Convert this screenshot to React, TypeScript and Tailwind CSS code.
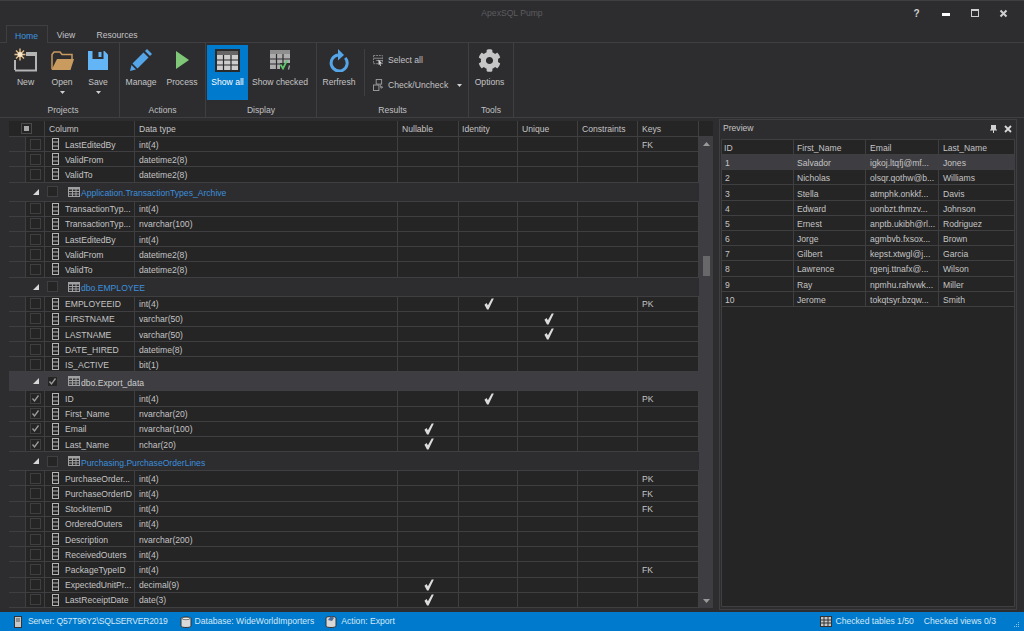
import React from "react";
import { FaCog } from "react-icons/fa";

type Row = {
  name: string;
  type?: string;
  checked?: boolean;
  nullable?: boolean;
  identity?: boolean;
  unique?: boolean;
  keys?: string;
  group?: boolean;
  selected?: boolean;
};

const rows: Row[] = [
  { name: "LastEditedBy", type: "int(4)", keys: "FK" },
  { name: "ValidFrom", type: "datetime2(8)" },
  { name: "ValidTo", type: "datetime2(8)" },
  { name: "Application.TransactionTypes_Archive", group: true },
  { name: "TransactionTyp...", type: "int(4)" },
  { name: "TransactionTyp...", type: "nvarchar(100)" },
  { name: "LastEditedBy", type: "int(4)" },
  { name: "ValidFrom", type: "datetime2(8)" },
  { name: "ValidTo", type: "datetime2(8)" },
  { name: "dbo.EMPLOYEE", group: true },
  { name: "EMPLOYEEID", type: "int(4)", identity: true, keys: "PK" },
  { name: "FIRSTNAME", type: "varchar(50)", unique: true },
  { name: "LASTNAME", type: "varchar(50)", unique: true },
  { name: "DATE_HIRED", type: "datetime(8)" },
  { name: "IS_ACTIVE", type: "bit(1)" },
  { name: "dbo.Export_data", group: true, selected: true, checked: true },
  { name: "ID", type: "int(4)", checked: true, identity: true, keys: "PK" },
  { name: "First_Name", type: "nvarchar(20)", checked: true },
  { name: "Email", type: "nvarchar(100)", checked: true, nullable: true },
  { name: "Last_Name", type: "nchar(20)", checked: true, nullable: true },
  { name: "Purchasing.PurchaseOrderLines", group: true },
  { name: "PurchaseOrder...", type: "int(4)", keys: "PK" },
  { name: "PurchaseOrderID", type: "int(4)", keys: "FK" },
  { name: "StockItemID", type: "int(4)", keys: "FK" },
  { name: "OrderedOuters", type: "int(4)" },
  { name: "Description", type: "nvarchar(200)" },
  { name: "ReceivedOuters", type: "int(4)" },
  { name: "PackageTypeID", type: "int(4)", keys: "FK" },
  { name: "ExpectedUnitPr...", type: "decimal(9)", nullable: true },
  { name: "LastReceiptDate", type: "date(3)", nullable: true },
];

const preview = [
  ["1", "Salvador", "igkoj.ltqfj@mf...", "Jones"],
  ["2", "Nicholas", "olsqr.qothw@b...", "Williams"],
  ["3", "Stella", "atmphk.onkkf...", "Davis"],
  ["4", "Edward", "uonbzt.thmzv...", "Johnson"],
  ["5", "Ernest", "anptb.ukibh@rl...", "Rodriguez"],
  ["6", "Jorge", "agmbvb.fxsox...", "Brown"],
  ["7", "Gilbert", "kepst.xtwgl@j...", "Garcia"],
  ["8", "Lawrence", "rgenj.ttnafx@...", "Wilson"],
  ["9", "Ray", "npmhu.rahvwk...", "Miller"],
  ["10", "Jerome", "tokqtsyr.bzqw...", "Smith"],
];

const TableIcon = ({ size = 12 }: { size?: number }) => (
  <svg width={size} height={size} viewBox="0 0 12 12" className="shrink-0">
    <rect x="0.5" y="1.5" width="11" height="9" fill="none" stroke="#a0a0a0" />
    <rect x="0.5" y="1.5" width="11" height="2" fill="#a0a0a0" />
    <path d="M4.500 3v7M8 3v7M1 5.500h10M1 8h10" stroke="#a0a0a0" strokeWidth="1" />
  </svg>
);

const ColumnIcon = () => (
  <svg width="7" height="12" viewBox="0 0 7 12" className="shrink-0">
    <rect x="0.5" y="0.5" width="6" height="11" fill="none" stroke="#b4b4b4" />
    <path d="M1 4h5M1 8h5" stroke="#b4b4b4" />
  </svg>
);

const Check = () => (
  <svg width="10" height="12" viewBox="0 0 11 13">
    <path d="M0.500 7.200 L2.800 5.400 L4.300 8 L8.500 0.500 L10.800 0.500 L5 12.500 L3.300 12.500 Z" fill="#dcdcdc" />
  </svg>
);

const SmallBox = ({ checked }: { checked?: boolean }) => (
  <div className="w-[11px] h-[11px] border border-[#3f3f42] bg-[#252526] flex items-center justify-center shrink-0">
    {checked && (
      <svg width="9" height="9" viewBox="0 0 9 9">
        <path d="M1.500 4.500 L3.500 7 L7.500 1.500" fill="none" stroke="#9c9c9c" strokeWidth="1.300" />
      </svg>
    )}
  </div>
);

const Caret = () => (
  <svg width="5" height="3" viewBox="0 0 5 3" className="shrink-0">
    <path d="M0 0h5L2.500 3z" fill="#d0d0d0" />
  </svg>
);

const RibbonBtn = ({
  w,
  label,
  icon,
  caret,
  active,
}: {
  w: string;
  label: string;
  icon: React.ReactNode;
  caret?: boolean;
  active?: boolean;
}) => (
  <div className={`${w} h-[55px] flex flex-col items-center shrink-0 ${active ? "bg-[#007acc] text-white" : ""}`}>
    <div className="h-[30px] flex items-center justify-center">{icon}</div>
    <div className="leading-[13px] mt-[1px] whitespace-nowrap">{label}</div>
    {caret && (
      <div className="mt-[2px] leading-none flex">
        <Caret />
      </div>
    )}
  </div>
);

const Group = ({ w, label, children }: { w: string; label: string; children: React.ReactNode }) => (
  <div className={`${w} shrink-0 h-full border-r border-[#3f3f42] flex flex-col`}>
    <div className="h-[55px] mt-[2px] flex">{children}</div>
    <div className="flex-1 flex items-center justify-center text-[#c0c0c0] pt-[4px]">{label}</div>
  </div>
);

const Cell = ({ children, className = "" }: { children?: React.ReactNode; className?: string }) => (
  <div className={`border-r border-[#3f3f42] flex items-center overflow-hidden whitespace-nowrap ${className}`}>
    {children}
  </div>
);

const cols = "grid-cols-[17px_19px_90px_263px_61px_59px_60px_60px_61px]";
const previewCols = "grid-cols-[72px_72px_73px_75px]";

export default function App() {
  return (
    <div
      className="w-[1024px] h-[631px] overflow-hidden bg-[#2d2d30] text-[#c4c4c4] text-[8.6px] flex flex-col border-t border-[#3f3f42]"
      style={{ fontFamily: '"Liberation Sans", Arial, sans-serif' }}
    >
      {/* title bar */}
      <div className="h-[24px] shrink-0 grid grid-cols-[1fr_auto_1fr] items-center">
        <div />
        <div className="text-[#5c5c5e]">ApexSQL Pump</div>
        <div className="flex items-center justify-end pr-[14px] gap-[16px] text-[#cfcfcf]">
          <span className="font-bold text-[10px] w-[13px] text-center">?</span>
          <div className="w-[13px] flex justify-center">
            <div className="w-[8px] h-[3px] bg-white mt-[2px]" />
          </div>
          <div className="w-[13px] flex justify-center">
            <div className="w-[8px] h-[8px] border border-[#cfcfcf] border-t-2" />
          </div>
          <svg width="13" height="9" viewBox="0 0 13 9">
            <path d="M3.500 1.500 L9.500 7.500 M9.500 1.500 L3.500 7.500" stroke="#cfcfcf" strokeWidth="2" />
          </svg>
        </div>
      </div>

      {/* tabs */}
      <div className="h-[18px] shrink-0 flex items-end pl-[6px] border-b border-[#3f3f42]">
        <div className="w-[42px] h-[18px] -mb-px pt-[4px] pr-[1px] bg-[#2d2d30] border border-b-0 border-[#3f3f42] text-[#3c96e0] flex items-center justify-center">
          Home
        </div>
        <div className="w-[36px] h-[18px] pt-[5px] flex items-center justify-center">View</div>
        <div className="w-[66px] h-[18px] pt-[5px] flex items-center justify-center">Resources</div>
      </div>

      {/* ribbon */}
      <div className="h-[75px] shrink-0 flex pl-[7px] border-b border-[#3f3f42]">
        <Group w="w-[113px]" label="Projects">
          <RibbonBtn
            w="w-[37px]"
            label="New"
            icon={
              <svg width="23" height="24" viewBox="0 0 23 24">
                <path d="M1 22V12M1 22.500h21V5H12" fill="none" stroke="#b4b4b4" strokeWidth="2" />
                <rect x="12" y="4" width="11" height="4" fill="#b4b4b4" />
                <path d="M6 0.500v12M0.500 6.500h11M2 2.500l8 8M10 2.500l-8 8" stroke="#e8c088" strokeWidth="1.400" />
                <circle cx="6" cy="6.500" r="2.500" fill="#f4e4c8" />
              </svg>
            }
          />
          <RibbonBtn
            w="w-[36px]"
            label="Open"
            caret
            icon={
              <svg width="23" height="19" viewBox="0 0 23 19">
                <path d="M1 18V3.500L3 1h6l2 2.500h10V8" fill="none" stroke="#c99b5e" strokeWidth="1.500" />
                <path d="M6 8h17L19.500 19H0.500z" fill="#c99b5e" />
              </svg>
            }
          />
          <RibbonBtn
            w="w-[36px]"
            label="Save"
            caret
            icon={
              <svg width="20" height="19" viewBox="0 0 20 19">
                <path d="M0 0h16.500L20 3.500V19H0z" fill="#64b5f6" />
                <rect x="4.500" y="0" width="11" height="8" fill="#2d2d30" />
                <rect x="10.500" y="1" width="3" height="5" fill="#64b5f6" />
              </svg>
            }
          />
        </Group>
        <Group w="w-[86px]" label="Actions">
          <RibbonBtn
            w="w-[42px]"
            label="Manage"
            icon={
              <svg width="22" height="22" viewBox="0 0 22 22">
                <path d="M2.500 14.500L13.500 3.500 18.500 8.500 7.500 19.500z" fill="#55a6e8" />
                <path d="M15 2l2-2 5 5-2 2z" fill="#55a6e8" />
                <path d="M1.500 16L6 20.500 0 22z" fill="#55a6e8" />
              </svg>
            }
          />
          <RibbonBtn
            w="w-[40px]"
            label="Process"
            icon={
              <svg width="13" height="18" viewBox="0 0 13 18">
                <path d="M0 0L13 9 0 18z" fill="#80c878" />
              </svg>
            }
          />
        </Group>
        <Group w="w-[111px]" label="Display">
          <div className="w-[1px]" />
          <RibbonBtn
            w="w-[41px]"
            label="Show all"
            active
            icon={
              <svg width="25" height="23" viewBox="0 0 25 23">
                <rect x="1" y="1" width="23" height="21" fill="#cdcdcd" stroke="#2a2a2a" strokeWidth="2" />
                <rect x="2" y="2" width="21" height="4" fill="#666" />
                <path d="M8.500 6v15M16 6v15M2 11h21M2 16h21" stroke="#2a2a2a" strokeWidth="1.200" />
              </svg>
            }
          />
          <RibbonBtn
            w="w-[64px]"
            label="Show checked"
            icon={
              <svg width="21" height="20" viewBox="0 0 21 20">
                <rect x="0" y="0" width="20" height="19" fill="#aeaeae" />
                <rect x="0" y="0" width="20" height="4" fill="#8f8f8f" />
                <path d="M6.500 4v15M13 4v15M0 9h20M0 14h20" stroke="#2d2d30" strokeWidth="1.200" />
                <path d="M10 13h11v7H10z" fill="#2d2d30" />
                <path d="M10.500 14.500l2.500 4 4-8" fill="none" stroke="#5fc76b" strokeWidth="1.800" />
                <path d="M18.500 19.500l1-4" fill="none" stroke="#aeaeae" strokeWidth="1.200" />
              </svg>
            }
          />
        </Group>
        <Group w="w-[152px]" label="Results">
          <div className="flex w-full">
            <RibbonBtn
              w="w-[44px]"
              label="Rerfresh"
              icon={
                <svg width="20" height="23" viewBox="0 0 20 23">
                  <path d="M16.300 8.900A8 8 0 1 1 9 6.100" fill="none" stroke="#55a6e8" strokeWidth="3" />
                  <path d="M9 0l6 6-6 5.500z" fill="#55a6e8" />
                </svg>
              }
            />
            <div className="w-px h-[47px] mt-[4px] ml-[3px] bg-[#3f3f42]" />
            <div className="flex flex-col pl-[8px]">
              <div className="h-[24px] mt-[3px] pt-[1px] flex items-center gap-[5px]">
                <svg width="10" height="11" viewBox="0 0 11 12">
                  <rect x="0.500" y="0.500" width="10" height="9" fill="none" stroke="#8e8e8e" strokeDasharray="2 1" />
                  <path d="M1 3.500h9M3.500 6h7" stroke="#8e8e8e" />
                  <path d="M6 5l4 4-2 .5 1 2-1 .5-1-2-1 1z" fill="#d0d0d0" />
                </svg>
                <span>Select all</span>
              </div>
              <div className="h-[24px] pt-[2px] flex items-center gap-[5px]">
                <svg width="10" height="12" viewBox="0 0 11 13">
                  <rect x="3.500" y="0.500" width="6" height="5" fill="none" stroke="#a0a0a0" />
                  <rect x="0.500" y="6.500" width="6" height="6" fill="none" stroke="#a0a0a0" />
                  <path d="M8 6v3h2.500M9 7.500l1.500 1.500L9 10.500" fill="none" stroke="#a0a0a0" />
                </svg>
                <span>Check/Uncheck</span>
                <span className="ml-[4px] flex">
                  <Caret />
                </span>
              </div>
            </div>
          </div>
        </Group>
        <Group w="w-[45px]" label="Tools">
          <RibbonBtn w="w-[41px]" label="Options" icon={<FaCog size={23} color="#c6c6c6" />} />
        </Group>
      </div>

      {/* body */}
      <div className="flex-1 min-h-0 flex pl-[9px] pr-[7px] pt-[1px] pb-[2px] gap-[6px]">
        {/* columns grid */}
        <div className="w-[704px] mt-[2px] mb-[2px] shrink-0 flex flex-col bg-[#2d2d30] min-h-0">
          <div className="flex shrink-0 h-[16px] bg-[#252526] border-b border-[#3f3f42]">
            <div className={`grid flex-1 ${cols}`}>
              <Cell className="col-span-2 justify-center pl-[2px] pr-[2px]">
                <div className="w-[11px] h-[11px] border border-[#4a4a4c] flex items-center justify-center">
                  <div className="w-[5px] h-[5px] bg-[#a8a8a8]" />
                </div>
              </Cell>
              <Cell className="pl-[4px] pt-[2px]">Column</Cell>
              <Cell className="pl-[4px] pt-[2px]">Data type</Cell>
              <Cell className="pl-[4px] pt-[2px]">Nullable</Cell>
              <Cell className="pl-[3px] pt-[2px]">Identity</Cell>
              <Cell className="pl-[4px] pt-[2px]">Unique</Cell>
              <Cell className="pl-[4px] pt-[2px]">Constraints</Cell>
              <Cell className="pl-[4px] pt-[2px]">Keys</Cell>
            </div>
            <div className="w-[14px]" />
          </div>
          <div className="flex flex-1 min-h-0">
            <div className="flex-1 flex flex-col overflow-hidden">
              {rows.map((r, i) =>
                r.group ? (
                  <div
                    key={i}
                    className={`h-[19px] shrink-0 flex items-center border-b border-[#3f3f42] ${
                      r.selected ? "bg-[#3e3e42] text-[#cccccc]" : "bg-[#2d2d30] text-[#3c8fdc]"
                    }`}
                  >
                    <svg width="6" height="6" viewBox="0 0 6 6" className="ml-[24px] shrink-0">
                      <path d="M6 0v6H0z" fill="#d8d8d8" />
                    </svg>
                    <div className="ml-[8px] mr-[10px]">
                      <SmallBox checked={r.checked} />
                    </div>
                    <TableIcon />
                    <span className="ml-[1px] pt-[4px] whitespace-nowrap">{r.name}</span>
                  </div>
                ) : (
                  <div key={i} className={`grid h-[15.2px] shrink-0 ${cols} border-b border-[#3f3f42] bg-[#252526]`}>
                    <Cell className="bg-[#2d2d30]" />
                    <Cell className="justify-center">
                      <SmallBox checked={r.checked} />
                    </Cell>
                    <Cell className="pl-[7px] gap-[6px]">
                      <ColumnIcon />
                      <span className="pt-[2px]">{r.name}</span>
                    </Cell>
                    <Cell className="pl-[4px] pt-[2px]">{r.type}</Cell>
                    <Cell className="justify-center pl-[2px]">{r.nullable && <Check />}</Cell>
                    <Cell className="justify-center pl-[2px]">{r.identity && <Check />}</Cell>
                    <Cell className="justify-center pl-[3px]">{r.unique && <Check />}</Cell>
                    <Cell />
                    <Cell className="pl-[4px] pt-[2px]">{r.keys}</Cell>
                  </div>
                )
              )}
            </div>
            {/* scrollbar */}
            <div className="w-[14px] shrink-0 bg-[#3e3e42] flex flex-col items-center pt-[5px]">
              <svg width="7" height="4" viewBox="0 0 7 4">
                <path d="M3.500 0L7 4H0z" fill="#9a9a9a" />
              </svg>
              <div className="w-[7px] h-[20px] bg-[#68686b] mt-[110px]" />
              <div className="flex-1" />
              <svg width="7" height="4" viewBox="0 0 7 4" className="mb-[5px]">
                <path d="M0 0h7L3.500 4z" fill="#9a9a9a" />
              </svg>
            </div>
          </div>
        </div>

        {/* preview */}
        <div className="flex-1 min-w-0 flex flex-col border border-[#3f3f42] px-[1px] pb-[2px]">
          <div className="h-[19px] shrink-0 flex items-center justify-between pl-[2px] pr-[3px] pb-[2px]">
            <span>Preview</span>
            <div className="flex items-center gap-[7px]">
              <svg width="7" height="8" viewBox="0 0 7 8">
                <path d="M1 0h5v4.500H7V5.500H4V8H3V5.500H0V4.500H1z" fill="#d0d0d0" />
              </svg>
              <svg width="8" height="8" viewBox="0 0 8 8">
                <path d="M1 1l6 6M7 1L1 7" stroke="#d8d8d8" strokeWidth="1.800" />
              </svg>
            </div>
          </div>
          <div className="flex-1 min-h-0 bg-[#252526] border border-[#3f3f42]">
            <div className={`grid ${previewCols} h-[15px] border-b border-[#3f3f42]`}>
              <Cell className="pl-[2px] pt-[2px]">ID</Cell>
              <Cell className="pl-[3px] pt-[2px]">First_Name</Cell>
              <Cell className="pl-[4px] pt-[2px]">Email</Cell>
              <Cell className="pl-[4px] pt-[2px] border-r-0">Last_Name</Cell>
            </div>
            {preview.map((p, i) => (
              <div
                key={p[0]}
                className={`grid ${previewCols} h-[15.2px] border-b border-[#3f3f42] ${i === 0 ? "bg-[#3e3e42]" : ""}`}
              >
                <Cell className="pl-[3px] pt-[3px]">{p[0]}</Cell>
                <Cell className="pl-[3px] pt-[3px]">{p[1]}</Cell>
                <Cell className="pl-[4px] pt-[3px]">{p[2]}</Cell>
                <Cell className="pl-[4px] pt-[3px] border-r-0">{p[3]}</Cell>
              </div>
            ))}
          </div>
        </div>
      </div>

      {/* status bar */}
      <div className="h-[19px] shrink-0 bg-[#007acc] text-[#d4e8f6] flex items-center pl-[14px] pr-[4px]">
        <svg width="8" height="12" viewBox="0 0 8 12" className="mr-[6px]">
          <rect x="0.500" y="0.500" width="7" height="11" fill="#c8c8c8" stroke="#333" />
          <path d="M2 3h4M2 5h4" stroke="#555" />
        </svg>
        <span className="tracking-[-0.2px]">Server: Q57T96Y2\SQLSERVER2019</span>
        <svg width="12" height="12" viewBox="0 0 12 12" className="ml-[12px] mr-[3px]">
          <path d="M1 2.500C1 .5 11 .5 11 2.500V10C11 12 1 12 1 10z" fill="#d8d8d8" stroke="#333" />
          <ellipse cx="6" cy="2.500" rx="4" ry="1.200" fill="#eee" stroke="#333" strokeWidth="0.600" />
        </svg>
        <span>Database: WideWorldImporters</span>
        <svg width="12" height="13" viewBox="0 0 12 13" className="ml-[11px] mr-[4px]">
          <path d="M1 3C1 1 11 1 11 3V11C11 13 1 13 1 11z" fill="#d8d8d8" stroke="#333" />
          <path d="M3 5l3-4 3 2-2 3z" fill="#4a6a9a" />
        </svg>
        <span>Action: Export</span>
        <div className="flex-1" />
        <svg width="12" height="11" viewBox="0 0 12 11" className="mr-[4px]">
          <rect x="0.500" y="0.500" width="11" height="10" fill="#c8c8c8" stroke="#333" />
          <path d="M4 1v9M8 1v9M1 4h10M1 7h10" stroke="#333" />
        </svg>
        <span>Checked tables 1/50</span>
        <span className="ml-[10px]">Checked views 0/3</span>
        <svg width="8" height="8" viewBox="0 0 8 8" className="ml-[16px] self-end mb-[2px]">
          <path d="M6 1h1v1H6zM4 3h1v1H4zM6 3h1v1H6zM2 5h1v1H2zM4 5h1v1H4zM6 5h1v1H6z" fill="#8fc4e8" />
        </svg>
      </div>
    </div>
  );
}
